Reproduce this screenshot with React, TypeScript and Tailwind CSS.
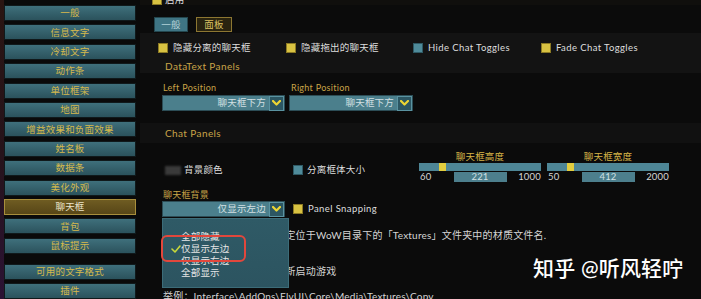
import React from 'react';

const NAV = [
  '一般',
  '信息文字',
  '冷却文字',
  '动作条',
  '单位框架',
  '地图',
  '增益效果和负面效果',
  '姓名板',
  '数据条',
  '美化外观',
  '聊天框',
  '背包',
  '鼠标提示',
];

const NAV_EXTRA = ['可用的文字格式', '插件'];

function NavButton({ label, active }: { label: string; active?: boolean }) {
  if (active) {
    return (
      <div className="flex h-[16px] items-center justify-center border border-[#a88e3c] bg-gradient-to-b from-[#6f5c22] to-[#574617] text-[9.5px] leading-none text-[#ece4cc]">
        {label}
      </div>
    );
  }
  return (
    <div className="flex h-[16px] items-center justify-center border border-[#10191b] bg-gradient-to-b from-[#3f707c] to-[#2b525c] text-[9.5px] leading-none text-[#d6ba4c]">
      {label}
    </div>
  );
}

function Check({ color }: { color: 'gold' | 'teal' }) {
  return (
    <div
      className={
        color === 'gold'
          ? 'h-[10px] w-[10px] shrink-0 border border-[#8c7a24] bg-[#d8c242]'
          : 'h-[10px] w-[10px] shrink-0 border border-[#2f5a65] bg-[#4f8b9a]'
      }
    />
  );
}

function Chevron() {
  return (
    <svg width="9" height="6" viewBox="0 0 9 6">
      <path d="M1 1 L4.5 4.5 L8 1" fill="none" stroke="#ecd534" strokeWidth="2.2" strokeLinecap="round" strokeLinejoin="round" />
    </svg>
  );
}

function Select({ value, width }: { value: string; width: string }) {
  return (
    <div className={`flex h-[16px] items-center justify-end border border-[#2c4d56] bg-[#4b7f8c] ${width}`}>
      <span className="pr-[3px] text-[9.5px] leading-none text-[#d3e0e3]">{value}</span>
      <div className="flex h-[15px] w-[15px] items-center justify-center border border-[#5a93a1] bg-[#2c5662]">
        <Chevron />
      </div>
    </div>
  );
}

function Slider({ label, min, max, value, thumb }: { label: string; min: string; max: string; value: string; thumb: string }) {
  return (
    <div className="flex w-[122px] flex-col">
      <div className="h-[11px] text-center text-[9.5px] leading-[11px] text-[#d7b548]">{label}</div>
      <div className="relative mt-[1px] h-[8px] bg-[#4e8696]">
        <div className={`absolute top-0 h-[8px] w-[7px] bg-[#e2cd3e] ${thumb}`} />
      </div>
      <div className="mt-[1px] flex h-[10px] items-center justify-between text-[9.5px] leading-none text-[#d6d6d6]">
        <span className="w-[30px] pl-[1px]">{min}</span>
        <div className="flex h-[10px] w-[53px] items-center justify-center bg-[#4d7f8d] text-[#cfe0e4]">{value}</div>
        <span className="w-[30px] text-right">{max}</span>
      </div>
    </div>
  );
}

export default function App() {
  return (
    <div className="flex h-[299px] w-[701px] overflow-hidden bg-[#0a0a0a] font-['Lato','Noto_Sans_CJK_SC',sans-serif] tracking-[0.2px]">
      {/* left edge */}
      <div className="w-[4px] bg-gradient-to-b from-[#2a1512] via-[#26131a] to-[#2b1234]" />

      {/* sidebar */}
      <div className="flex w-[132px] flex-col pt-[5px]">
        <div className="flex flex-col gap-[3.4px]">
          {NAV.map((n) => (
            <NavButton key={n} label={n} active={n === '聊天框'} />
          ))}
        </div>
        <div className="mt-[6px] h-[1px] bg-[#9c8238]" />
        <div className="mt-[4px] flex flex-col gap-[3.4px]">
          {NAV_EXTRA.map((n) => (
            <NavButton key={n} label={n} />
          ))}
        </div>
      </div>

      <div className="w-[4px]" />

      {/* main */}
      <div className="relative flex-1 overflow-hidden bg-[#0b0b0b]">
        <div className="-mt-[5px] flex h-[10px] items-center gap-[3px] bg-[#100f0d] pl-[12px]">
          <Check color="gold" />
          <span className="text-[9.5px] leading-none text-[#e0e0e0]">启用</span>
        </div>

        <div className="mt-[12px] flex gap-[8px] pl-[14px]">
          <div className="flex h-[15px] w-[34px] items-center justify-center border border-[#24474f] bg-[#3f7584] text-[9.5px] leading-none text-[#b5d2d8]">
            一般
          </div>
          <div className="flex h-[15px] w-[36px] items-center justify-center border border-[#8d7732] bg-[#29230f] text-[9.5px] leading-none text-[#dcc264]">
            面板
          </div>
        </div>

        {/* general options band */}
        <div className="mt-[1px] h-[40px] bg-[#131313] pt-[10px]">
          <div className="grid h-[10px] grid-cols-[128px_127px_128px_128px] pl-[18px]">
            <div className="flex items-center gap-[5px]">
              <Check color="gold" />
              <span className="text-[9.5px] leading-none text-[#dedede]">隐藏分离的聊天框</span>
            </div>
            <div className="flex items-center gap-[5px]">
              <Check color="gold" />
              <span className="text-[9.5px] leading-none text-[#dedede]">隐藏拖出的聊天框</span>
            </div>
            <div className="flex items-center gap-[5px]">
              <Check color="teal" />
              <span className="whitespace-nowrap text-[9.5px] leading-none tracking-[0.4px] text-[#dedede]">Hide Chat Toggles</span>
            </div>
            <div className="flex items-center gap-[5px]">
              <Check color="gold" />
              <span className="whitespace-nowrap text-[9.5px] leading-none tracking-[0.4px] text-[#dedede]">Fade Chat Toggles</span>
            </div>
          </div>
          <div className="mt-[7px] pl-[25px] text-[10px] leading-[12px] tracking-[0.4px] text-[#c9a448]">DataText Panels</div>
        </div>

        {/* datatext positions */}
        <div className="mt-[10px] flex gap-[4px] pl-[22px]">
          <div className="flex flex-col">
            <div className="h-[10px] pl-[1px] text-[9px] leading-[10px] tracking-[0.3px] text-[#c9a448]">Left Position</div>
            <div className="mt-[2px]">
              <Select value="聊天框下方" width="w-[123px]" />
            </div>
          </div>
          <div className="flex flex-col">
            <div className="h-[10px] pl-[2px] text-[9px] leading-[10px] tracking-[0.3px] text-[#c9a448]">Right Position</div>
            <div className="mt-[2px]">
              <Select value="聊天框下方" width="w-[124px]" />
            </div>
          </div>
        </div>

        {/* chat panels header */}
        <div className="mt-[12px] flex h-[20px] items-center bg-[#111111] pl-[25px] text-[10px] leading-none tracking-[0.4px] text-[#c9a448]">
          Chat Panels
        </div>

        <div className="mt-[8px] flex h-[32px] pl-[25px]">
          <div className="flex w-[128px] items-center gap-[3px] pt-[6px]">
            <div className="h-[9px] w-[16px] bg-[#3a3a3a] blur-[1px]" />
            <span className="text-[9.5px] leading-none text-[#dedede]">背景颜色</span>
          </div>
          <div className="flex w-[126px] items-center gap-[4px] pt-[6px]">
            <Check color="teal" />
            <span className="text-[9.5px] leading-none text-[#dedede]">分离框体大小</span>
          </div>
          <div className="flex gap-[6px]">
            <Slider label="聊天框高度" min="60" max="1000" value="221" thumb="left-[20px]" />
            <Slider label="聊天框宽度" min="50" max="2000" value="412" thumb="left-[20px]" />
          </div>
        </div>

        <div className="mt-[7px] h-[9px] pl-[23px] text-[9px] leading-[9px] text-[#c9a448]">聊天框背景</div>
        <div className="mt-[2px] flex items-center pl-[22px]">
          <Select value="仅显示左边" width="w-[123px]" />
          <div className="ml-[8px] flex items-center gap-[5px]">
            <Check color="gold" />
            <span className="whitespace-nowrap text-[9.5px] leading-none tracking-[0.4px] text-[#dedede]">Panel Snapping</span>
          </div>
        </div>

        <div className="mt-[12px] whitespace-nowrap pl-[23px] text-[10px] leading-[12px] text-[#d4d4d4]">
          聊天框背景所用材质，需指定位于WoW目录下的「Textures」文件夹中的材质文件名.
        </div>
        <div className="mt-[24px] whitespace-nowrap pl-[23px] text-[10px] leading-[12px] text-[#d4d4d4]">
          注意：更改此设置后需要重新启动游戏
        </div>
        <div className="mt-[13px] whitespace-nowrap pl-[23px] text-[10px] leading-[12px] text-[#d4d4d4]">
          举例：Interface\AddOns\ElvUI\Core\Media\Textures\Copy
        </div>

        {/* open dropdown menu */}
        <div className="absolute left-[22px] top-[218px] h-[70px] w-[127px] border border-[#3c6c78] bg-gradient-to-b from-[#2f5a66] to-[#2c5460] pt-[11px]">
          <div className="flex h-[12.5px] items-center pl-[18px] text-[9.5px] leading-none text-[#e6e6e6]">全部隐藏</div>
          <div className="flex h-[12.5px] items-center pl-[8px] text-[9.5px] leading-none text-[#e6e6e6]">
            <svg width="10" height="8" viewBox="0 0 10 8">
              <path d="M1 4 L4 7 L9 1" fill="none" stroke="#c8d83a" strokeWidth="1.6" strokeLinecap="round" strokeLinejoin="round" />
            </svg>
            仅显示左边
          </div>
          <div className="flex h-[12px] items-center pl-[18px] text-[9.5px] leading-none text-[#e6e6e6]">仅显示右边</div>
          <div className="flex h-[12px] items-center pl-[18px] text-[9.5px] leading-none text-[#e6e6e6]">全部显示</div>
        </div>

        {/* red highlight */}
        <div className="absolute left-[21px] top-[235px] h-[27px] w-[85px] rounded-[6px] border-2 border-[#e2473c]" />

        {/* watermark */}
        <div className="absolute left-[393px] top-[255px] whitespace-nowrap text-[21px] font-medium leading-[26px] text-white">
          知乎 @听风轻咛
        </div>
      </div>
    </div>
  );
}
